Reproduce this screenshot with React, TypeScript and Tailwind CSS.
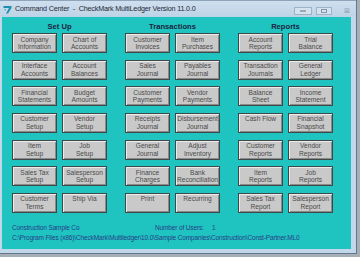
import React from 'react'

const groups = [
  {
    title: 'Set Up',
    rows: [
      ['Company\nInformation', 'Chart of\nAccounts'],
      ['Interface\nAccounts', 'Account\nBalances'],
      ['Financial\nStatements', 'Budget\nAmounts'],
      ['Customer\nSetup', 'Vendor\nSetup'],
      ['Item\nSetup', 'Job\nSetup'],
      ['Sales Tax\nSetup', 'Salesperson\nSetup'],
      ['Customer\nTerms', 'Ship Via'],
    ],
  },
  {
    title: 'Transactions',
    rows: [
      ['Customer\nInvoices', 'Item\nPurchases'],
      ['Sales\nJournal', 'Payables\nJournal'],
      ['Customer\nPayments', 'Vendor\nPayments'],
      ['Receipts\nJournal', 'Disbursement\nJournal'],
      ['General\nJournal', 'Adjust\nInventory'],
      ['Finance\nCharges', 'Bank\nReconciliation'],
      ['Print', 'Recurring'],
    ],
  },
  {
    title: 'Reports',
    rows: [
      ['Account\nReports', 'Trial\nBalance'],
      ['Transaction\nJournals', 'General\nLedger'],
      ['Balance\nSheet', 'Income\nStatement'],
      ['Cash Flow', 'Financial\nSnapshot'],
      ['Customer\nReports', 'Vendor\nReports'],
      ['Item\nReports', 'Job\nReports'],
      ['Sales Tax\nReport', 'Salesperson\nReport'],
    ],
  },
]

function CmdButton({ label }: { label: string }) {
  return (
    <button className="h-[20px] w-[45px] bg-[#c9c9c9] border border-[#3f4747] shadow-[inset_1px_1px_0_#ececec,inset_-1px_-1px_0_#8a8a8a] text-[6.6px] leading-[7.6px] text-[#4a4a4a] whitespace-pre text-center pt-[1.5px] flex flex-col items-center justify-start">
      {label}
    </button>
  )
}

export default function App() {
  return (
    <div className="w-[360px] h-[257px] overflow-hidden bg-[#a7afb6] font-['Liberation_Sans',Arial,sans-serif]">
      <div className="w-[357px] h-[254px] bg-[#c2d7ea] border-r border-b border-[#61788f] flex flex-col">
        {/* Title bar */}
        <div className="h-[17px] flex items-center pl-[3px] pr-[4px] bg-gradient-to-b from-[#cfdfee] to-[#bed3e7] border-t border-[#8ea4ba]">
          <svg width="9" height="9" viewBox="0 0 9 9" className="mr-[3px]">
            <path d="M0.5 1 L8.5 1 L8.5 3 L5 8.5 L3 8.5 L6 3 L0.5 3 Z" fill="#1f8fb0" />
            <path d="M1 4 L3 4 L2.5 6 Z" fill="#3fb7c9" />
          </svg>
          <span className="text-[7.2px] text-[#1f2937] whitespace-pre tracking-tight">
            Command Center  -  CheckMark MultiLedger Version 11.0.0
          </span>
          <div className="ml-auto flex items-center pt-[3px]">
            <div className="w-[18px] h-[8px] border border-[#9fb3c6] bg-[#d6e3ef] flex items-center justify-center">
              <div className="w-[6px] h-[2px] bg-[#9aaabb]" />
            </div>
            <div className="ml-[4px] w-[16px] h-[8px] border border-[#9fb3c6] bg-[#d6e3ef] flex items-center justify-center">
              <div className="w-[6px] h-[4px] border border-[#8496aa]" />
            </div>
            <div className="ml-[9px] w-[11px] h-[8px] flex items-center justify-center text-[7px] leading-none text-[#8fa2b6]">
              ⊠
            </div>
          </div>
        </div>

        {/* Body */}
        <div className="ml-[2px] mr-[5px] h-[232px] bg-[#1fc4c0] pl-[10px] pt-[4px] flex flex-col">
          <div className="flex gap-[18px]">
            {groups.map((g) => (
              <div key={g.title} className="flex flex-col">
                <div className="h-[12px] text-center text-[7.6px] font-bold text-[#1c2540] leading-[12px]">
                  {g.title}
                </div>
                <div className="grid grid-cols-[45px_45px] gap-x-[5px] gap-y-[6.67px]">
                  {g.rows.flat().map((label) => (
                    <CmdButton key={label} label={label} />
                  ))}
                </div>
              </div>
            ))}
          </div>

          <div className="mt-[10px] text-[6.55px] leading-[10px] text-[#27408a] tracking-tight">
            <div className="flex whitespace-pre">
              <span className="w-[143px]">Construction Sample Co</span>
              <span>Number of Users:     1</span>
            </div>
            <div className="whitespace-pre">
              C:\Program Files (x86)\CheckMark\Multiledger\10.0\Sample Companies\Construction\Const-Partner.ML0
            </div>
          </div>
        </div>
      </div>
    </div>
  )
}
